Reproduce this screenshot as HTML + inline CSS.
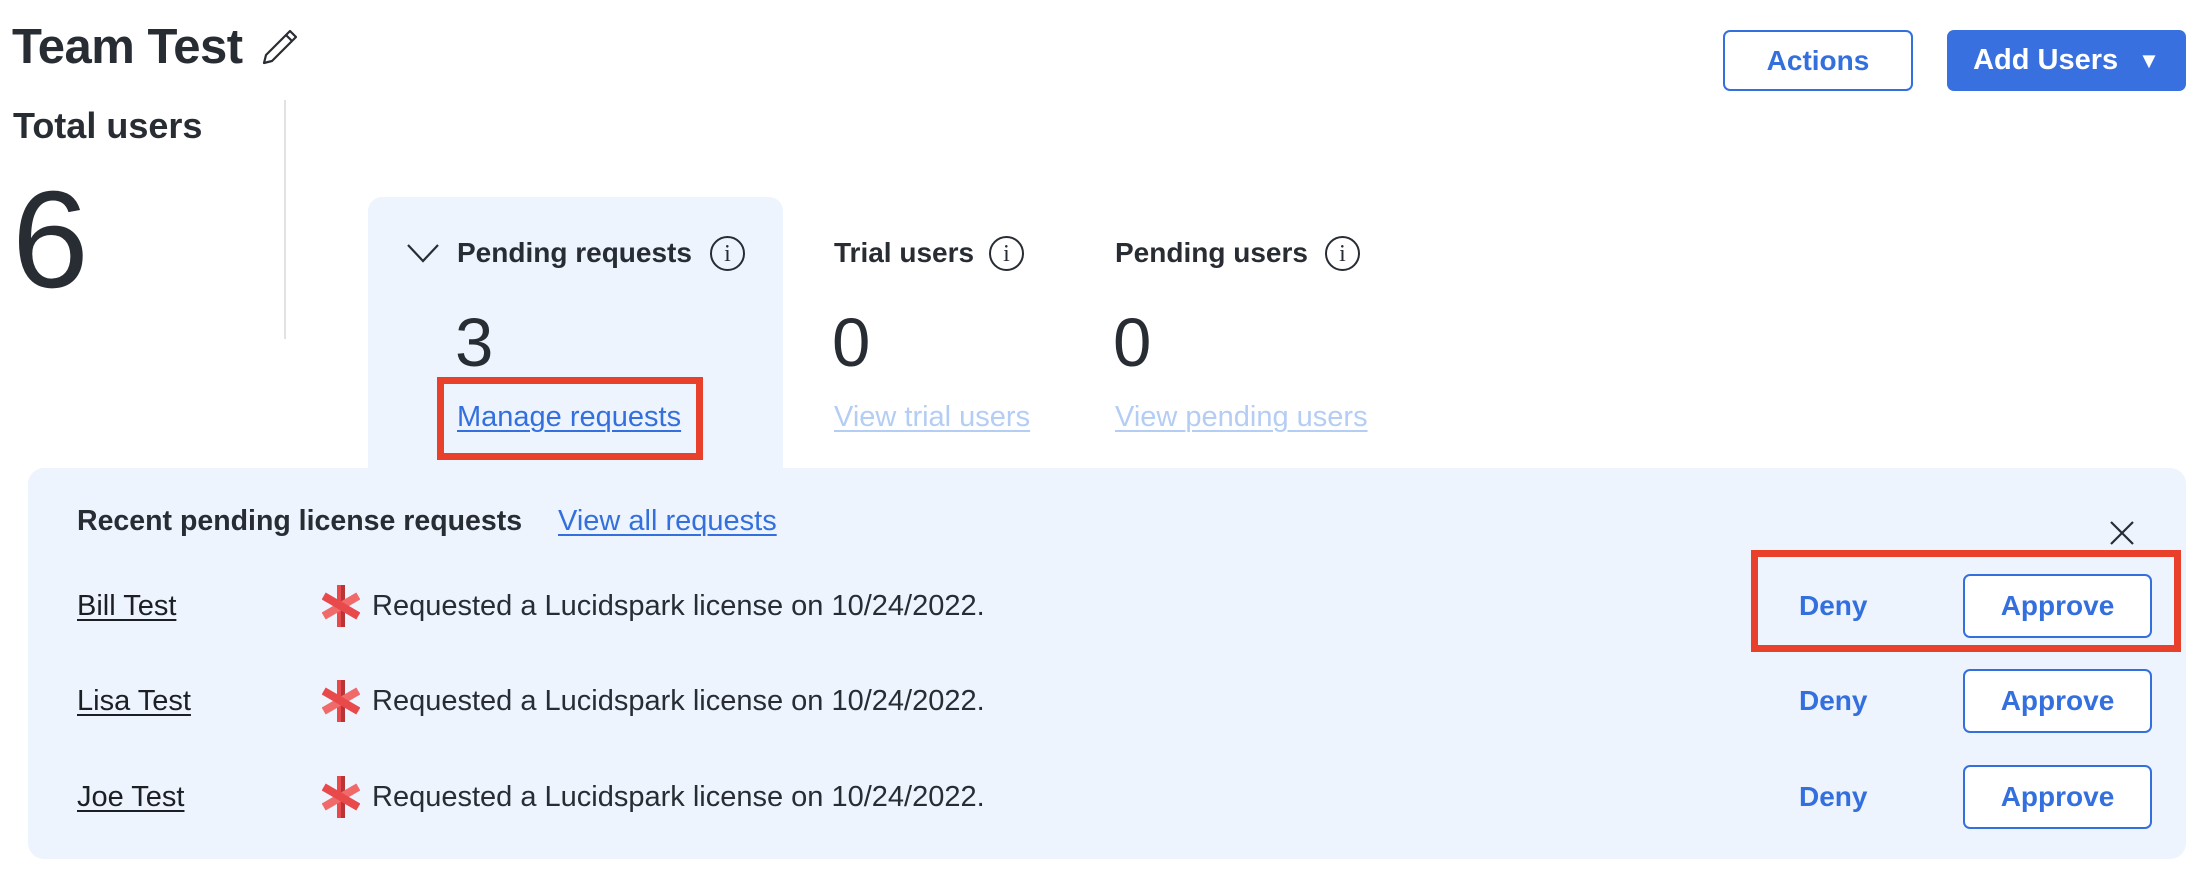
<!DOCTYPE html>
<html><head><meta charset="utf-8"><style>
*{margin:0;padding:0;box-sizing:border-box}
body{width:2204px;height:878px;background:#fff;font-family:"Liberation Sans",sans-serif;color:#282c33;position:relative;overflow:hidden}
.a{position:absolute;white-space:nowrap}
.t{display:flex;align-items:center}
.b{font-weight:bold}
.info{position:absolute;width:35px;height:35px;border:2px solid #282c33;border-radius:50%;font-family:"Liberation Serif",serif;font-size:24px;display:flex;align-items:center;justify-content:center;line-height:1}
.link{color:#3470dd;text-decoration:underline;text-underline-offset:4px;text-decoration-thickness:2px}
.faint{color:#b4cdf5;text-decoration:underline;text-underline-offset:4px;text-decoration-thickness:2px}
.name{color:#1c1f24;text-decoration:underline;text-underline-offset:4px;text-decoration-thickness:2px;font-size:29px}
.appr{position:absolute;left:1963px;width:189px;height:64px;border:2px solid #3470dd;border-radius:7px;background:#fff;color:#3470dd;font-weight:bold;font-size:28px;display:flex;align-items:center;justify-content:center}
.deny{position:absolute;left:1799px;color:#3470dd;font-weight:bold;font-size:28px;height:64px;display:flex;align-items:center}
</style></head><body>

<div class="a t b" style="left:12px;top:20px;height:54px;font-size:49px;letter-spacing:-0.5px">Team Test</div>
<svg class="a" style="left:261px;top:28px" width="38" height="38" viewBox="0 0 38 38"><path d="M29 3 L35 9 L11 33 L3 35 L5 27 Z M25 7 L31 13" fill="none" stroke="#282c33" stroke-width="2.2" stroke-linejoin="round"/></svg>

<div class="a t" style="left:1723px;top:30px;width:190px;height:61px;border:2px solid #3470dd;border-radius:7px;justify-content:center;color:#3470dd;font-weight:bold;font-size:28px">Actions</div>
<div class="a t" style="left:1947px;top:30px;width:239px;height:61px;background:#3871df;border-radius:7px;justify-content:center;color:#fff;font-weight:bold;font-size:29px">Add Users<span style="font-size:22px;margin-left:20px">▼</span></div>

<div class="a t b" style="left:13px;top:104px;height:44px;font-size:36px">Total users</div>
<div class="a" style="left:284px;top:100px;width:2px;height:239px;background:#e2e2e2"></div>
<div class="a t" style="left:12px;top:180px;height:120px;font-size:138px">6</div>

<div class="a" style="left:368px;top:197px;width:415px;height:290px;background:#edf4fe;border-radius:14px 14px 0 0"></div>
<div class="a" style="left:28px;top:468px;width:2158px;height:391px;background:#edf4fe;border-radius:16px"></div>

<svg class="a" style="left:406px;top:242px" width="34" height="22" viewBox="0 0 34 22"><path d="M2 3 L17 19 L32 3" fill="none" stroke="#282c33" stroke-width="2.2"/></svg>
<div class="a t b" style="left:457px;top:233px;height:40px;font-size:28px">Pending requests</div>
<div class="info" style="left:710px;top:236px">i</div>
<div class="a t" style="left:455px;top:304px;height:76px;font-size:69px">3</div>
<div class="a t" style="left:457px;top:397px;height:40px;font-size:29px"><span class="link">Manage requests</span></div>
<div class="a" style="left:437px;top:377px;width:266px;height:83px;border:7px solid #e8402a"></div>

<div class="a t b" style="left:834px;top:233px;height:40px;font-size:28px">Trial users</div>
<div class="info" style="left:989px;top:236px">i</div>
<div class="a t" style="left:832px;top:304px;height:76px;font-size:69px">0</div>
<div class="a t" style="left:834px;top:397px;height:40px;font-size:29px"><span class="faint">View trial users</span></div>

<div class="a t b" style="left:1115px;top:233px;height:40px;font-size:28px">Pending users</div>
<div class="info" style="left:1325px;top:236px">i</div>
<div class="a t" style="left:1113px;top:304px;height:76px;font-size:69px">0</div>
<div class="a t" style="left:1115px;top:397px;height:40px;font-size:29px"><span class="faint">View pending users</span></div>

<div class="a t b" style="left:77px;top:501px;height:40px;font-size:28.5px">Recent pending license requests</div>
<div class="a t" style="left:558px;top:501px;height:40px;font-size:29px"><span class="link">View all requests</span></div>
<svg class="a" style="left:2108px;top:519px" width="28" height="28" viewBox="0 0 28 28"><path d="M3 3 L25 25 M25 3 L3 25" stroke="#282c33" stroke-width="2.2"/></svg>

<div class="a t" style="left:77px;top:586px;height:40px"><span class="name">Bill Test</span></div>
<div class="a t" style="left:77px;top:681px;height:40px"><span class="name">Lisa Test</span></div>
<div class="a t" style="left:77px;top:777px;height:40px"><span class="name">Joe Test</span></div>

<svg class="a" style="left:322px;top:584px" width="38" height="44" viewBox="0 0 38 44">
<g transform="translate(19 22)"><rect x="-4" y="-21" width="8" height="42" fill="#e8494b"/><rect x="0" y="-21" width="4" height="42" fill="#b83436"/><rect x="-4" y="-20" width="8" height="40" fill="#f06a6a" transform="rotate(60)"/><rect x="-4" y="-20" width="8" height="40" fill="#e8494b" transform="rotate(-60)"/></g></svg>
<svg class="a" style="left:322px;top:679px" width="38" height="44" viewBox="0 0 38 44">
<g transform="translate(19 22)"><rect x="-4" y="-21" width="8" height="42" fill="#e8494b"/><rect x="0" y="-21" width="4" height="42" fill="#b83436"/><rect x="-4" y="-20" width="8" height="40" fill="#f06a6a" transform="rotate(60)"/><rect x="-4" y="-20" width="8" height="40" fill="#e8494b" transform="rotate(-60)"/></g></svg>
<svg class="a" style="left:322px;top:775px" width="38" height="44" viewBox="0 0 38 44">
<g transform="translate(19 22)"><rect x="-4" y="-21" width="8" height="42" fill="#e8494b"/><rect x="0" y="-21" width="4" height="42" fill="#b83436"/><rect x="-4" y="-20" width="8" height="40" fill="#f06a6a" transform="rotate(60)"/><rect x="-4" y="-20" width="8" height="40" fill="#e8494b" transform="rotate(-60)"/></g></svg>

<div class="a t" style="left:372px;top:586px;height:40px;font-size:29px">Requested a Lucidspark license on 10/24/2022.</div>
<div class="a t" style="left:372px;top:681px;height:40px;font-size:29px">Requested a Lucidspark license on 10/24/2022.</div>
<div class="a t" style="left:372px;top:777px;height:40px;font-size:29px">Requested a Lucidspark license on 10/24/2022.</div>

<div class="deny" style="top:574px">Deny</div>
<div class="deny" style="top:669px">Deny</div>
<div class="deny" style="top:765px">Deny</div>
<div class="appr" style="top:574px">Approve</div>
<div class="appr" style="top:669px">Approve</div>
<div class="appr" style="top:765px">Approve</div>

<div class="a" style="left:1751px;top:550px;width:430px;height:102px;border:7px solid #e8402a"></div>
</body></html>
